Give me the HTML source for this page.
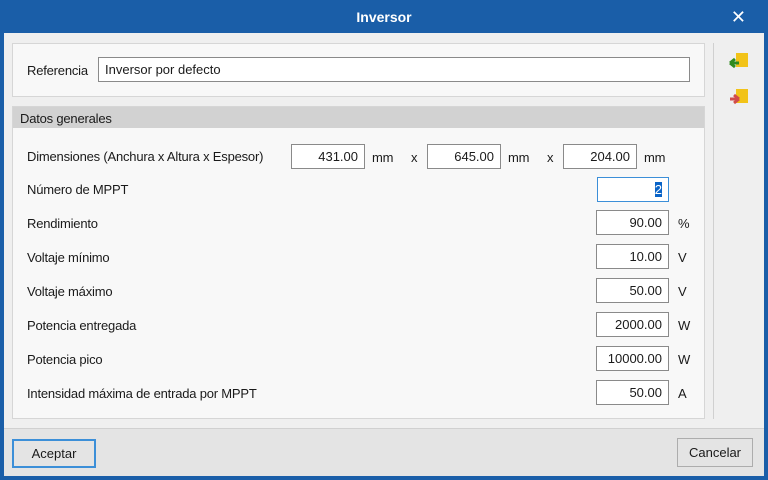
<!DOCTYPE html>
<html><head><meta charset="utf-8"><style>
*{box-sizing:border-box;margin:0;padding:0}
body{width:768px;height:480px;overflow:hidden;background:#1a5ea8;font-family:"Liberation Sans",sans-serif;font-size:13px;color:#1a1a1a;position:relative}
.title{position:absolute;left:0;top:0;width:768px;height:33px;color:#fff;text-align:center;line-height:35px;font-size:14px;font-weight:bold}
.x{position:absolute;right:22px;top:8px;color:#fff;font-size:18px;line-height:18px}
.win{position:absolute;left:4px;top:33px;width:760px;height:443px;background:#efefef}
.p{position:absolute;background:#f8f8f8;border:1px solid #d6d6d6}
.t{position:absolute;white-space:nowrap;letter-spacing:-0.2px}
.in{position:absolute;height:25px;background:#fff;border:1px solid #8a8a8a;text-align:right;padding-right:6px;line-height:23px}
.btn{position:absolute;height:29px;background:#e4e4e4;border:1px solid #adadad;text-align:center;line-height:27px}
</style></head><body>
<div class="title">Inversor</div><div class="x">✕</div>
<div class="win"></div>
<div class="p" style="left:12px;top:43px;width:693px;height:54px"></div>
<div class="t" style="left:27px;top:63px">Referencia</div>
<div class="in" style="left:98px;top:57px;width:592px;text-align:left;padding-left:6px">Inversor por defecto</div>
<div class="p" style="left:12px;top:106px;width:693px;height:313px"></div>
<div style="position:absolute;left:13px;top:107px;width:691px;height:21px;background:#d2d2d2"></div>
<div class="t" style="left:20px;top:111px">Datos generales</div>
<div style="position:absolute;left:713px;top:43px;width:1px;height:376px;background:#d0d0d0"></div>
<svg style="position:absolute;left:728px;top:52px" width="22" height="20"><rect x="8" y="1" width="12" height="14" fill="#f2c318"/><path d="M2 11h9M2 11l5-4M2 11l5 4" stroke="#2f8a1e" stroke-width="3" fill="none"/></svg>
<svg style="position:absolute;left:728px;top:88px" width="22" height="20"><rect x="8" y="1" width="12" height="14" fill="#f2c318"/><path d="M2 11h9M11 11l-5-4M11 11l-5 4" stroke="#d14b4b" stroke-width="3" fill="none"/></svg>
<div class="t" style="left:27px;top:149px">Dimensiones (Anchura x Altura x Espesor)</div>
<div class="in" style="left:291px;top:144px;width:74px">431.00</div><div class="t" style="left:372px;top:150px">mm</div><div class="t" style="left:411px;top:150px">x</div>
<div class="in" style="left:427px;top:144px;width:74px">645.00</div><div class="t" style="left:508px;top:150px">mm</div><div class="t" style="left:547px;top:150px">x</div>
<div class="in" style="left:563px;top:144px;width:74px">204.00</div><div class="t" style="left:644px;top:150px">mm</div>
<div class="t" style="left:27px;top:182px">Número de MPPT</div>
<div class="in" style="left:597px;top:177px;width:72px;border-color:#3c8fd8"><span style="background:#0a64c8;color:#fff">2</span></div>
<div class="t" style="left:27px;top:216px">Rendimiento</div><div class="in" style="left:596px;top:210px;width:73px">90.00</div><div class="t" style="left:678px;top:216px">%</div>
<div class="t" style="left:27px;top:250px">Voltaje mínimo</div><div class="in" style="left:596px;top:244px;width:73px">10.00</div><div class="t" style="left:678px;top:250px">V</div>
<div class="t" style="left:27px;top:284px">Voltaje máximo</div><div class="in" style="left:596px;top:278px;width:73px">50.00</div><div class="t" style="left:678px;top:284px">V</div>
<div class="t" style="left:27px;top:318px">Potencia entregada</div><div class="in" style="left:596px;top:312px;width:73px">2000.00</div><div class="t" style="left:678px;top:318px">W</div>
<div class="t" style="left:27px;top:352px">Potencia pico</div><div class="in" style="left:596px;top:346px;width:73px">10000.00</div><div class="t" style="left:678px;top:352px">W</div>
<div class="t" style="left:27px;top:386px">Intensidad máxima de entrada por MPPT</div><div class="in" style="left:596px;top:380px;width:73px">50.00</div><div class="t" style="left:678px;top:386px">A</div>
<div style="position:absolute;left:4px;top:428px;width:760px;height:48px;background:#e4e4e4;border-top:1px solid #d0d0d0"></div>
<div class="btn" style="left:12px;top:439px;width:84px;border:2px solid #3c8fd8;line-height:25px">Aceptar</div>
<div class="btn" style="left:677px;top:438px;width:76px">Cancelar</div>
</body></html>
